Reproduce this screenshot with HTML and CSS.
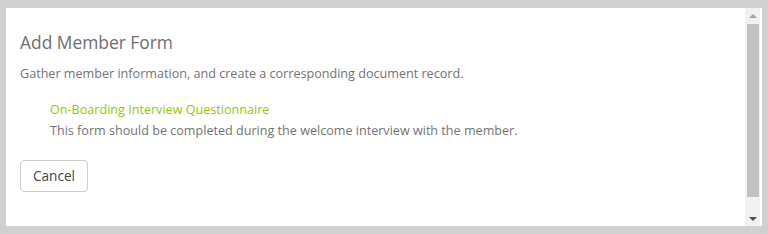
FILE: index.html
```
<!DOCTYPE html>
<html lang="en">
<head>
    <meta charset="UTF-8">
    <title>Add Member Form</title>
    <link rel="stylesheet" href="styles.css">
</head>
<body>
    <div class="panel">
        <div class="content">
            <h2 class="title">Add Member Form</h2>
            <p class="lead">Gather member information, and create a corresponding document record.</p>
            <div class="forms">
                <a class="form-link" href="#">On-Boarding Interview Questionnaire</a>
                <p class="form-desc">This form should be completed during the welcome interview with the member.</p>
            </div>
            <button class="btn" type="button">Cancel</button>
        </div>
        <div class="scrollbar">
            <div class="arrow up"></div>
            <div class="thumb"></div>
            <div class="arrow down"></div>
        </div>
    </div>
</body>
</html>
```

FILE: styles.css
```
html, body {
    margin: 0;
    height: 100%;
}
body {
    background-color: #d0d0d0;
    padding: 8px 6px;
    box-sizing: border-box;
    font-family: 'Open Sans', sans-serif;
    overflow: hidden;
}
.panel {
    display: flex;
    height: 218px;
    padding-right: 2px;
    background-color: #fff;
}
.content {
    flex: 1;
    padding: 21px 14px 0 14px;
    color: #737373;
}
.title {
    margin: 0;
    font-size: 17.4px;
    font-weight: 400;
    line-height: 26px;
    color: #6e6e6e;
}
.lead {
    margin: 9px 0 0;
    font-size: 12.6px;
    line-height: 20px;
}
.forms {
    margin: 16px 0 0 30px;
}
.form-link {
    display: block;
    font-size: 12.6px;
    line-height: 20px;
    color: #8fcb00;
    text-decoration: none;
}
.form-desc {
    margin: 1px 0 0;
    font-size: 12.6px;
    line-height: 20px;
}
.btn {
    margin-top: 19px;
    padding: 5px 12px;
    font-family: inherit;
    font-size: 13.6px;
    line-height: 20px;
    color: #444;
    background-color: #fff;
    border: 1px solid #ccc;
    border-radius: 4px;
}

/* fake scrollbar */
.scrollbar {
    width: 15px;
    display: flex;
    flex-direction: column;
    align-items: center;
    background-color: #f1f1f1;
}
.arrow {
    height: 15px;
    width: 15px;
    display: flex;
    justify-content: center;
    align-items: center;
}
.arrow::before {
    content: '';
    width: 0;
    height: 0;
    border-left: 4px solid transparent;
    border-right: 4px solid transparent;
}
.arrow.up::before {
    border-bottom: 4px solid #a3a3a3;
}
.arrow.down {
    margin-top: auto;
}
.arrow.down::before {
    border-top: 4px solid #505050;
}
.thumb {
    width: 12px;
    height: 173px;
    margin: 1px 0 0 1px;
    background-color: #c1c1c1;
}
```
